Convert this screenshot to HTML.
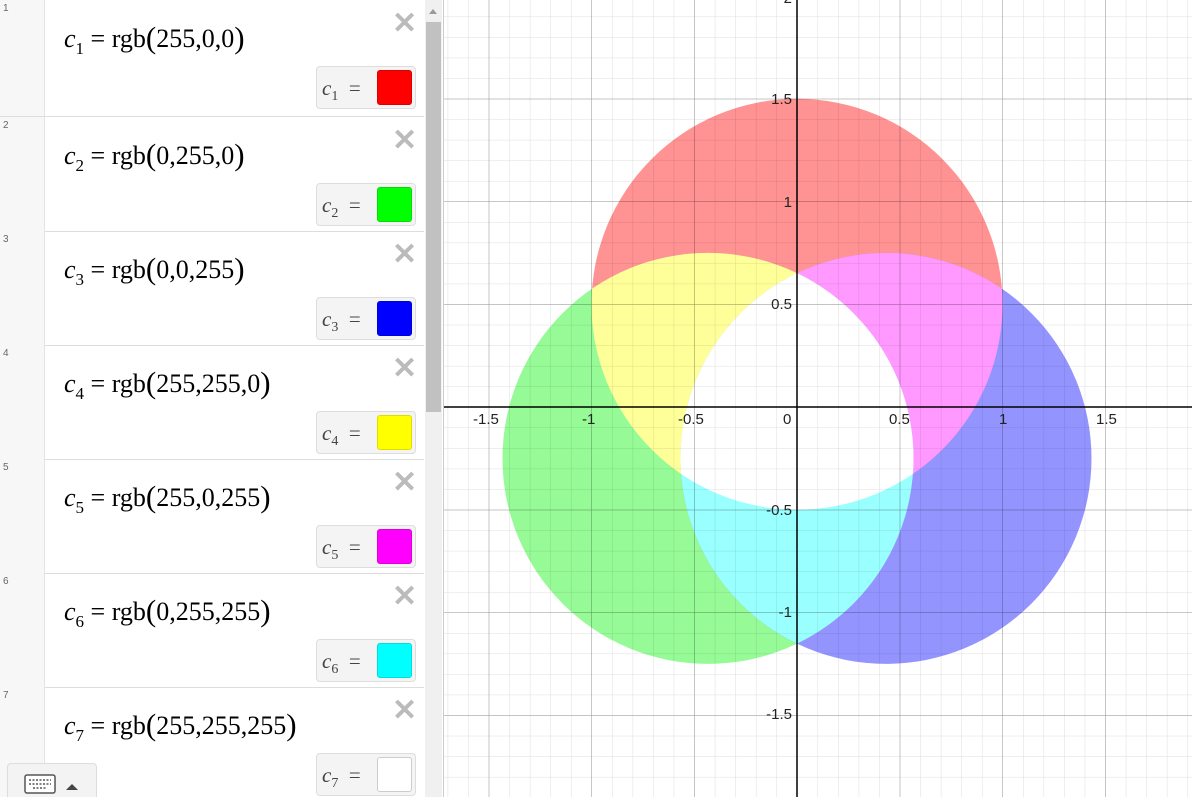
<!DOCTYPE html>
<html><head><meta charset="utf-8"><style>
body{margin:0;width:1192px;height:797px;overflow:hidden;background:#fff;font-family:"Liberation Sans",sans-serif;position:relative}
#panel{position:absolute;left:0;top:0;width:443px;height:797px;background:#fff;border-right:1px solid #ccc;overflow:hidden}
.row{position:absolute;left:0;width:424px;height:114px;border-bottom:1px solid #ddd}
.gut{position:absolute;left:0;top:0;width:44px;height:100%;background:#f7f7f7;border-right:1px solid #e4e4e4}
.num{position:absolute;left:3px;top:3px;font-size:10px;color:#666}
.math{position:absolute;left:64px;top:20px;font-family:"Liberation Serif",serif;font-size:26px;color:#000;white-space:nowrap}
.math sub{font-size:17px;vertical-align:-7px}
.math .p{font-size:31px;vertical-align:-1px}
.x{position:absolute;left:392px;top:6px;font-size:30px;color:#bbb;font-weight:bold}
.lab{position:absolute;left:316px;top:66px;width:98px;height:41px;background:#f4f4f4;border:1px solid #ddd;border-radius:4px}
.lab .t{position:absolute;left:5px;top:9px;font-family:"Liberation Serif",serif;font-size:21px;color:#444}
.lab .t sub{font-size:14px;vertical-align:-5px}
.sw{position:absolute;left:60px;top:3px;width:33px;height:33px;border-radius:3px;border:1px solid #ccc}
#sb{position:absolute;left:425px;top:0;width:17px;height:797px;background:#f0f0f0}
#th{position:absolute;left:426px;top:22px;width:15px;height:390px;background:#c1c1c1}
#kb{position:absolute;left:7px;top:763px;width:88px;height:36px;background:#f3f3f3;border:1px solid #ddd;border-radius:4px}
svg text{font-family:"Liberation Sans",sans-serif;font-size:15px;fill:#222}
</style></head><body>
<svg width="1192" height="797" style="position:absolute;left:0;top:0">
<defs>
<pattern id="mn" patternUnits="userSpaceOnUse" x="797" y="407" width="20.55" height="20.55"><path d="M0 0H20.55M0 0V20.55" stroke="rgba(0,0,0,0.13)" stroke-width="1" fill="none"/></pattern>
<pattern id="mj" patternUnits="userSpaceOnUse" x="797" y="407" width="102.75" height="102.75"><path d="M0 0H102.75M0 0V102.75" stroke="rgba(0,0,0,0.35)" stroke-width="1" fill="none"/></pattern>
<clipPath id="cr"><circle cx="797" cy="304.25" r="205.5"/></clipPath>
<clipPath id="cg"><circle cx="708" cy="458.4" r="205.5"/></clipPath>
<clipPath id="cb"><circle cx="886" cy="458.4" r="205.5"/></clipPath>
</defs>
<circle cx="797" cy="304.25" r="205.5" fill="#ff9292"/>
<circle cx="708" cy="458.4" r="205.5" fill="#96fa96"/>
<circle cx="886" cy="458.4" r="205.5" fill="#9494ff"/>
<g clip-path="url(#cr)"><circle cx="708" cy="458.4" r="205.5" fill="#ffff99"/><circle cx="886" cy="458.4" r="205.5" fill="#ff99ff"/></g>
<g clip-path="url(#cg)"><circle cx="886" cy="458.4" r="205.5" fill="#99ffff"/></g>
<g clip-path="url(#cr)"><g clip-path="url(#cg)"><circle cx="886" cy="458.4" r="205.5" fill="#fff"/></g></g>
<rect x="444" y="0" width="748" height="797" fill="url(#mn)"/>
<rect x="444" y="0" width="748" height="797" fill="url(#mj)"/>
<line x1="797" y1="0" x2="797" y2="797" stroke="#000" stroke-width="1.5"/>
<line x1="444" y1="407" x2="1192" y2="407" stroke="#000" stroke-width="1.5"/>
<text x="473" y="424">-1.5</text><text x="582" y="424">-1</text><text x="678" y="424">-0.5</text>
<text x="783" y="424">0</text><text x="889" y="424">0.5</text><text x="999" y="424">1</text><text x="1096" y="424">1.5</text>
<g text-anchor="end"><text x="792" y="104">1.5</text><text x="792" y="207">1</text><text x="792" y="309">0.5</text>
<text x="792" y="515">-0.5</text><text x="792" y="617">-1</text><text x="792" y="719">-1.5</text><text x="792" y="3">2</text></g>
</svg>
<div id="panel">
<div class="row" style="top:0;height:116px;border-top:0"><div class="gut"><span class="num">1</span></div><div class="math"><i>c</i><sub>1</sub> = rgb<span class="p">(</span>255,0,0<span class="p">)</span></div><div class="x">✕</div><div class="lab"><span class="t"><i>c</i><sub>1</sub> &nbsp;=</span><div class="sw" style="background:#f00;border-color:#d00"></div></div></div>
<div class="row" style="top:117px"><div class="gut"><span class="num">2</span></div><div class="math"><i>c</i><sub>2</sub> = rgb<span class="p">(</span>0,255,0<span class="p">)</span></div><div class="x">✕</div><div class="lab"><span class="t"><i>c</i><sub>2</sub> &nbsp;=</span><div class="sw" style="background:#0f0;border-color:#0d0"></div></div></div>
<div class="row" style="top:231px"><div class="gut"><span class="num">3</span></div><div class="math"><i>c</i><sub>3</sub> = rgb<span class="p">(</span>0,0,255<span class="p">)</span></div><div class="x">✕</div><div class="lab"><span class="t"><i>c</i><sub>3</sub> &nbsp;=</span><div class="sw" style="background:#00f;border-color:#00d"></div></div></div>
<div class="row" style="top:345px"><div class="gut"><span class="num">4</span></div><div class="math"><i>c</i><sub>4</sub> = rgb<span class="p">(</span>255,255,0<span class="p">)</span></div><div class="x">✕</div><div class="lab"><span class="t"><i>c</i><sub>4</sub> &nbsp;=</span><div class="sw" style="background:#ff0;border-color:#dd0"></div></div></div>
<div class="row" style="top:459px"><div class="gut"><span class="num">5</span></div><div class="math"><i>c</i><sub>5</sub> = rgb<span class="p">(</span>255,0,255<span class="p">)</span></div><div class="x">✕</div><div class="lab"><span class="t"><i>c</i><sub>5</sub> &nbsp;=</span><div class="sw" style="background:#f0f;border-color:#d0d"></div></div></div>
<div class="row" style="top:573px"><div class="gut"><span class="num">6</span></div><div class="math"><i>c</i><sub>6</sub> = rgb<span class="p">(</span>0,255,255<span class="p">)</span></div><div class="x">✕</div><div class="lab"><span class="t"><i>c</i><sub>6</sub> &nbsp;=</span><div class="sw" style="background:#0ff;border-color:#0dd"></div></div></div>
<div class="row" style="top:687px"><div class="gut"><span class="num">7</span></div><div class="math"><i>c</i><sub>7</sub> = rgb<span class="p">(</span>255,255,255<span class="p">)</span></div><div class="x">✕</div><div class="lab"><span class="t"><i>c</i><sub>7</sub> &nbsp;=</span><div class="sw" style="background:#fff"></div></div></div>
<div id="sb"></div><div id="th"></div>
<div style="position:absolute;left:429px;top:9px;width:0;height:0;border-left:4px solid transparent;border-right:4px solid transparent;border-bottom:5px solid #999"></div>
<div id="kb"><svg width="88" height="36" style="position:absolute;left:0;top:0"><rect x="17" y="11" width="30" height="18" rx="2" fill="#fff" stroke="#555" stroke-width="1.5"/><path d="M21 16h22M21 20h22M25 24h14" stroke="#555" stroke-width="1.5" stroke-dasharray="2 1.5"/><path d="M58 26l6-6 6 6z" fill="#444"/></svg></div>
</div>
</body></html>
